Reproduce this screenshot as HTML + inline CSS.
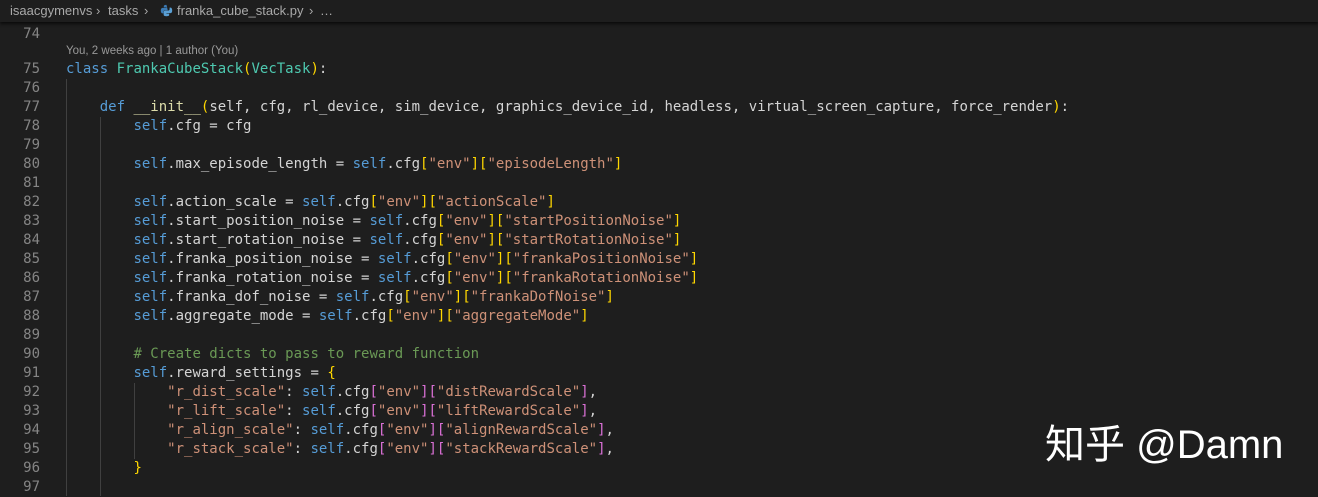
<!DOCTYPE html>
<html><head><meta charset="utf-8"><style>
html,body{margin:0;padding:0;width:1318px;height:495px;overflow:hidden;background:#1e1e1e;}
.bc{position:absolute;left:0;top:0;width:1318px;height:22px;background:#1e1e1e;font:13px "Liberation Sans",sans-serif;color:#a9a9a9;line-height:21px;box-shadow:0 2px 3px #0b0b0b;z-index:2}
.bc span{position:absolute;top:0}
.ln{position:absolute;left:0;width:40px;text-align:right;color:#858585;font:14px "DejaVu Sans Mono",monospace;line-height:19px;height:19px}
.cd{position:absolute;left:66px;white-space:pre;color:#d4d4d4;font:14px "DejaVu Sans Mono",monospace;line-height:19px;height:19px}
.g{position:absolute;width:1px;background:#404040}
.k{color:#569cd6}.c{color:#4ec9b0}.s{color:#ce9178}.y{color:#ffd700}.p{color:#da70d6}.cm{color:#6a9955}.f{color:#dcdcaa}
.lens{position:absolute;left:66px;top:44px;font:11.5px "Liberation Sans",sans-serif;color:#999;}
.wm{position:absolute;left:1045px;top:412px;font:40px "Liberation Sans","Noto Sans CJK SC",sans-serif;color:#fff;white-space:nowrap}
.code{position:absolute;left:0;top:1px;width:1318px;height:495px}
</style></head><body>
<div class="bc"><span style="left:10px">isaacgymenvs</span><span style="left:96px">›</span><span style="left:108px">tasks</span><span style="left:144px">›</span>
<svg style="position:absolute;left:160px;top:4px" width="13" height="13" viewBox="0 0 16 16"><path d="M8 1C4.5 1 4.7 2.5 4.7 2.5V4.2H8.1V4.7H3.3S1 4.4 1 8s2 3.5 2 3.5h1.2V9.8s-.1-2 2-2h3.4s1.900 1.9-1.9V3s.3-2-3.5-2z" fill="#3c7bb5"/><path d="M8 15c3.5 0 3.3-1.5 3.3-1.5V11.8H7.9v-.5h4.8S15 11.6 15 8s-2-3.5-2-3.5h-1.2v1.7s.1 2-2 2H6.4s-1.9 0-1.9 1.9V13s-.3 2 3.5 2z" fill="#5a9fd4"/></svg>
<span style="left:177px">franka_cube_stack.py</span><span style="left:309px">›</span><span style="left:320px">…</span></div>

<div class="code">
<div class="g" style="left:66px;top:78px;height:417px"></div>
<div class="g" style="left:100px;top:116px;height:379px"></div>
<div class="g" style="left:134px;top:382px;height:76px"></div>

<div class="ln" style="top:24px">74</div>
<div class="lens">You, 2 weeks ago | 1 author (You)</div>
<div class="ln" style="top:59px">75</div><div class="cd" style="top:59px"><span class="k">class</span> <span class="c">FrankaCubeStack</span><span class="y">(</span><span class="c">VecTask</span><span class="y">)</span>:</div>
<div class="ln" style="top:78px">76</div>
<div class="ln" style="top:97px">77</div><div class="cd" style="top:97px">    <span class="k">def</span> <span class="f">__init__</span><span class="y">(</span>self, cfg, rl_device, sim_device, graphics_device_id, headless, virtual_screen_capture, force_render<span class="y">)</span>:</div>
<div class="ln" style="top:116px">78</div><div class="cd" style="top:116px">        <span class="k">self</span>.cfg = cfg</div>
<div class="ln" style="top:135px">79</div>
<div class="ln" style="top:154px">80</div><div class="cd" style="top:154px">        <span class="k">self</span>.max_episode_length = <span class="k">self</span>.cfg<span class="y">[</span><span class="s">"env"</span><span class="y">][</span><span class="s">"episodeLength"</span><span class="y">]</span></div>
<div class="ln" style="top:173px">81</div>
<div class="ln" style="top:192px">82</div><div class="cd" style="top:192px">        <span class="k">self</span>.action_scale = <span class="k">self</span>.cfg<span class="y">[</span><span class="s">"env"</span><span class="y">][</span><span class="s">"actionScale"</span><span class="y">]</span></div>
<div class="ln" style="top:211px">83</div><div class="cd" style="top:211px">        <span class="k">self</span>.start_position_noise = <span class="k">self</span>.cfg<span class="y">[</span><span class="s">"env"</span><span class="y">][</span><span class="s">"startPositionNoise"</span><span class="y">]</span></div>
<div class="ln" style="top:230px">84</div><div class="cd" style="top:230px">        <span class="k">self</span>.start_rotation_noise = <span class="k">self</span>.cfg<span class="y">[</span><span class="s">"env"</span><span class="y">][</span><span class="s">"startRotationNoise"</span><span class="y">]</span></div>
<div class="ln" style="top:249px">85</div><div class="cd" style="top:249px">        <span class="k">self</span>.franka_position_noise = <span class="k">self</span>.cfg<span class="y">[</span><span class="s">"env"</span><span class="y">][</span><span class="s">"frankaPositionNoise"</span><span class="y">]</span></div>
<div class="ln" style="top:268px">86</div><div class="cd" style="top:268px">        <span class="k">self</span>.franka_rotation_noise = <span class="k">self</span>.cfg<span class="y">[</span><span class="s">"env"</span><span class="y">][</span><span class="s">"frankaRotationNoise"</span><span class="y">]</span></div>
<div class="ln" style="top:287px">87</div><div class="cd" style="top:287px">        <span class="k">self</span>.franka_dof_noise = <span class="k">self</span>.cfg<span class="y">[</span><span class="s">"env"</span><span class="y">][</span><span class="s">"frankaDofNoise"</span><span class="y">]</span></div>
<div class="ln" style="top:306px">88</div><div class="cd" style="top:306px">        <span class="k">self</span>.aggregate_mode = <span class="k">self</span>.cfg<span class="y">[</span><span class="s">"env"</span><span class="y">][</span><span class="s">"aggregateMode"</span><span class="y">]</span></div>
<div class="ln" style="top:325px">89</div>
<div class="ln" style="top:344px">90</div><div class="cd" style="top:344px">        <span class="cm"># Create dicts to pass to reward function</span></div>
<div class="ln" style="top:363px">91</div><div class="cd" style="top:363px">        <span class="k">self</span>.reward_settings = <span class="y">{</span></div>
<div class="ln" style="top:382px">92</div><div class="cd" style="top:382px">            <span class="s">"r_dist_scale"</span>: <span class="k">self</span>.cfg<span class="p">[</span><span class="s">"env"</span><span class="p">][</span><span class="s">"distRewardScale"</span><span class="p">]</span>,</div>
<div class="ln" style="top:401px">93</div><div class="cd" style="top:401px">            <span class="s">"r_lift_scale"</span>: <span class="k">self</span>.cfg<span class="p">[</span><span class="s">"env"</span><span class="p">][</span><span class="s">"liftRewardScale"</span><span class="p">]</span>,</div>
<div class="ln" style="top:420px">94</div><div class="cd" style="top:420px">            <span class="s">"r_align_scale"</span>: <span class="k">self</span>.cfg<span class="p">[</span><span class="s">"env"</span><span class="p">][</span><span class="s">"alignRewardScale"</span><span class="p">]</span>,</div>
<div class="ln" style="top:439px">95</div><div class="cd" style="top:439px">            <span class="s">"r_stack_scale"</span>: <span class="k">self</span>.cfg<span class="p">[</span><span class="s">"env"</span><span class="p">][</span><span class="s">"stackRewardScale"</span><span class="p">]</span>,</div>
<div class="ln" style="top:458px">96</div><div class="cd" style="top:458px">        <span class="y">}</span></div>
<div class="ln" style="top:477px">97</div>
</div>

<div class="wm">知乎 @Damn</div>
</body></html>
